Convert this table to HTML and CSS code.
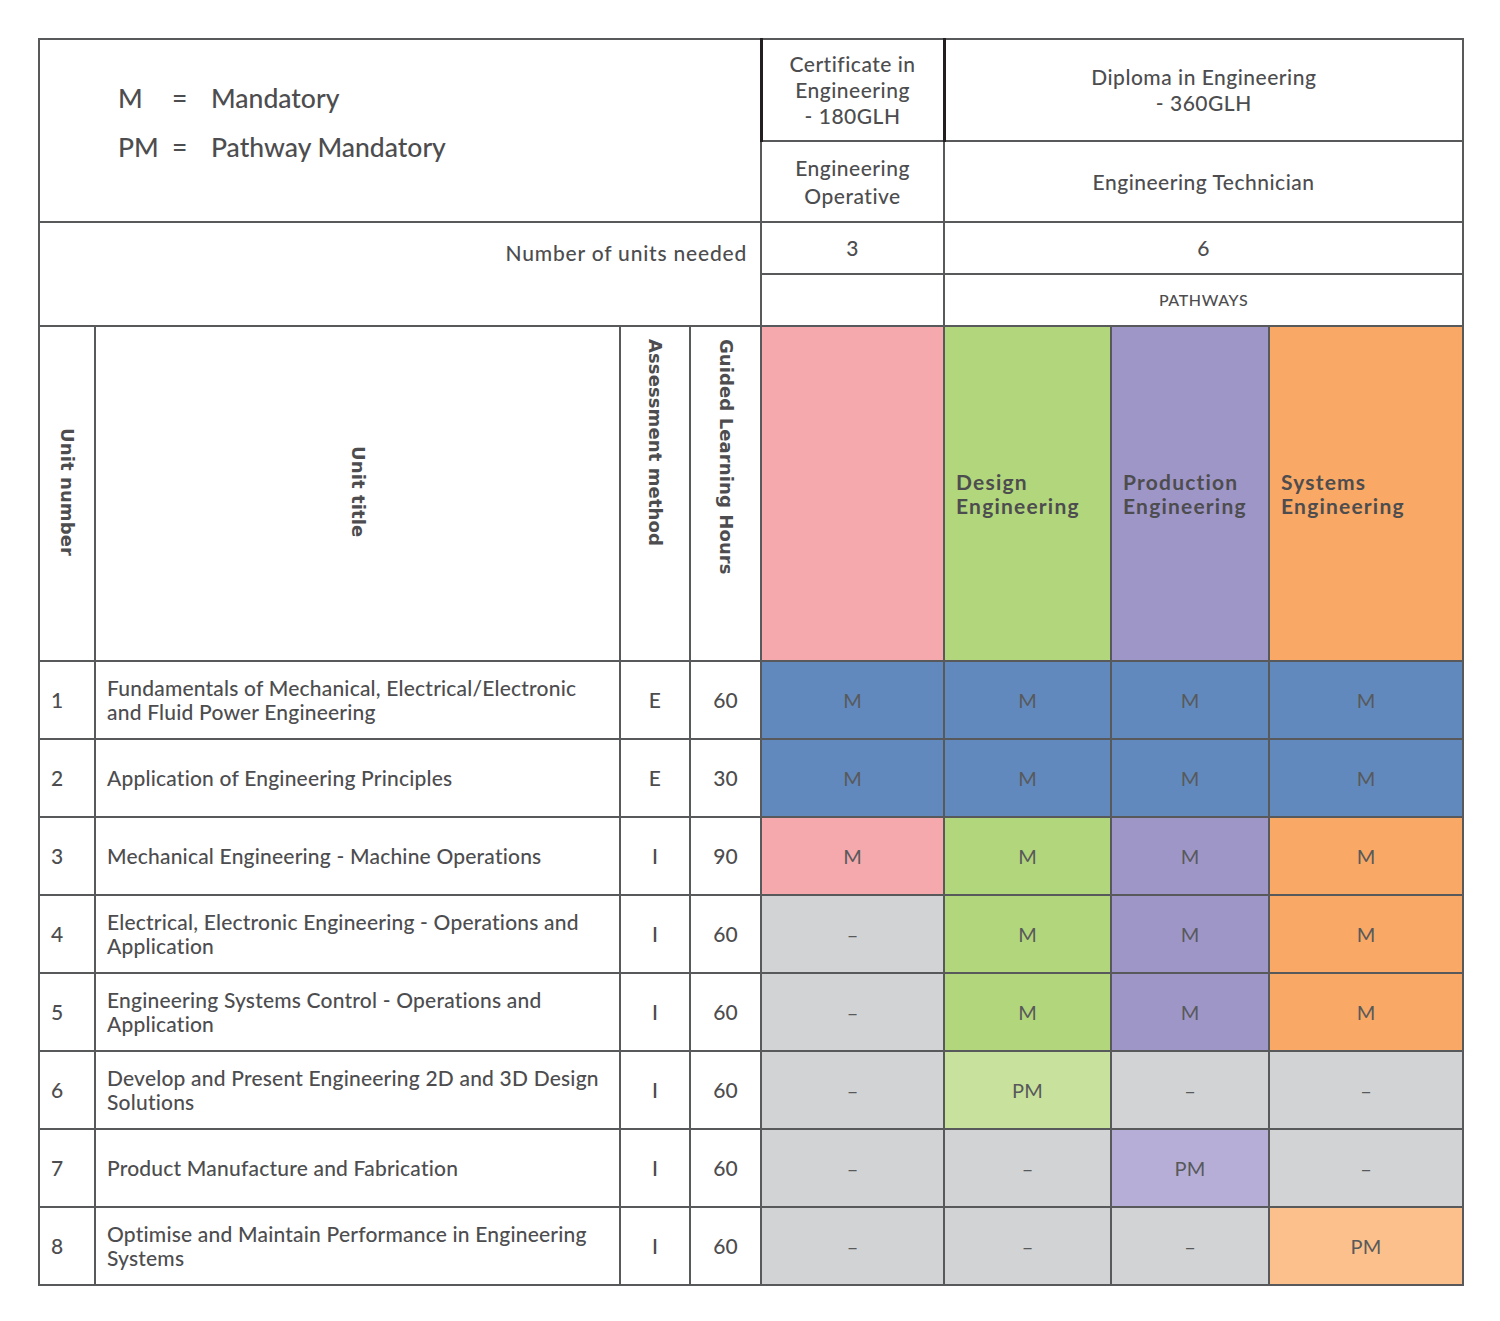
FILE: index.html
```html
<!DOCTYPE html>
<html lang="en">
<head>
<meta charset="utf-8">
<title>Engineering units</title>
<link rel="stylesheet" href="styles.css">
</head>
<body>
<table class="grid">
  <colgroup>
    <col class="c-num"><col class="c-title"><col class="c-am"><col class="c-glh">
    <col class="c-op"><col class="c-de"><col class="c-pe"><col class="c-se">
  </colgroup>
  <tr class="r-qual">
    <td colspan="4" rowspan="2" class="legend">
      <div class="legend-grid">
        <span>M</span><span>=</span><span>Mandatory</span>
        <span>PM</span><span>=</span><span>Pathway Mandatory</span>
      </div>
    </td>
    <td class="hd cert">Certificate in<br>Engineering<br>- 180GLH</td>
    <td colspan="3" class="hd">Diploma in Engineering<br>- 360GLH</td>
  </tr>
  <tr class="r-role">
    <td class="hd role">Engineering<br>Operative</td>
    <td colspan="3" class="hd">Engineering Technician</td>
  </tr>
  <tr class="r-units">
    <td colspan="4" rowspan="2" class="units-label">Number of units needed</td>
    <td class="hd">3</td>
    <td colspan="3" class="hd">6</td>
  </tr>
  <tr class="r-path">
    <td></td>
    <td colspan="3" class="pathways">PATHWAYS</td>
  </tr>
  <tr class="r-head">
    <td class="vh mid"><span class="vtext">Unit number</span></td>
    <td class="vh mid"><span class="vtext">Unit title</span></td>
    <td class="vh top"><span class="vtext">Assessment method</span></td>
    <td class="vh top"><span class="vtext">Guided Learning Hours</span></td>
    <td class="pink"></td>
    <td class="green path-name">Design<br>Engineering</td>
    <td class="purple path-name">Production<br>Engineering</td>
    <td class="orange path-name">Systems<br>Engineering</td>
  </tr>
  <tr class="r-data">
    <td class="num">1</td>
    <td class="title">Fundamentals of Mechanical, Electrical/Electronic<br>and Fluid Power Engineering</td>
    <td class="ctr">E</td><td class="ctr">60</td>
    <td class="mark blue">M</td><td class="mark blue">M</td><td class="mark blue">M</td><td class="mark blue">M</td>
  </tr>
  <tr class="r-data">
    <td class="num">2</td>
    <td class="title">Application of Engineering Principles</td>
    <td class="ctr">E</td><td class="ctr">30</td>
    <td class="mark blue">M</td><td class="mark blue">M</td><td class="mark blue">M</td><td class="mark blue">M</td>
  </tr>
  <tr class="r-data">
    <td class="num">3</td>
    <td class="title">Mechanical Engineering - Machine Operations</td>
    <td class="ctr">I</td><td class="ctr">90</td>
    <td class="mark pink">M</td><td class="mark green">M</td><td class="mark purple">M</td><td class="mark orange">M</td>
  </tr>
  <tr class="r-data">
    <td class="num">4</td>
    <td class="title">Electrical, Electronic Engineering - Operations and<br>Application</td>
    <td class="ctr">I</td><td class="ctr">60</td>
    <td class="mark grey">–</td><td class="mark green">M</td><td class="mark purple">M</td><td class="mark orange">M</td>
  </tr>
  <tr class="r-data">
    <td class="num">5</td>
    <td class="title">Engineering Systems Control - Operations and<br>Application</td>
    <td class="ctr">I</td><td class="ctr">60</td>
    <td class="mark grey">–</td><td class="mark green">M</td><td class="mark purple">M</td><td class="mark orange">M</td>
  </tr>
  <tr class="r-data">
    <td class="num">6</td>
    <td class="title">Develop and Present Engineering 2D and 3D Design<br>Solutions</td>
    <td class="ctr">I</td><td class="ctr">60</td>
    <td class="mark grey">–</td><td class="mark green-lt">PM</td><td class="mark grey">–</td><td class="mark grey">–</td>
  </tr>
  <tr class="r-data">
    <td class="num">7</td>
    <td class="title">Product Manufacture and Fabrication</td>
    <td class="ctr">I</td><td class="ctr">60</td>
    <td class="mark grey">–</td><td class="mark grey">–</td><td class="mark purple-lt">PM</td><td class="mark grey">–</td>
  </tr>
  <tr class="r-data">
    <td class="num">8</td>
    <td class="title">Optimise and Maintain Performance in Engineering<br>Systems</td>
    <td class="ctr">I</td><td class="ctr">60</td>
    <td class="mark grey">–</td><td class="mark grey">–</td><td class="mark grey">–</td><td class="mark orange-lt">PM</td>
  </tr>
</table>
</body>
</html>
```
FILE: styles.css
```css
html, body {
  margin: 0;
  padding: 0;
  background: #ffffff;
}

body {
  padding: 38px 0 0 38px;
  font-family: "Lato", "Liberation Sans", sans-serif;
  font-weight: 500;
  color: #4d4d4f;
}

.grid {
  border-collapse: collapse;
  table-layout: fixed;
  width: 1424px;
  border: 2px solid #58595b;
}

.grid td {
  border: 2px solid #58595b;
  padding: 0;
  font-size: 21px;
  line-height: 24px;
  letter-spacing: 0.2px;
}

.c-num { width: 56px; }
.c-title { width: 525px; }
.c-am { width: 70px; }
.c-glh { width: 71px; }
.c-op { width: 183px; }
.c-de { width: 167px; }
.c-pe { width: 158px; }
.c-se { width: 194px; }

.r-qual { height: 102px; }
.r-role { height: 81px; }
.r-units { height: 52px; }
.r-path { height: 52px; }
.r-head { height: 335px; }
.r-data { height: 78px; }

.legend {
  vertical-align: top;
  padding: 34px 0 0 78px !important;
}

.legend-grid {
  display: grid;
  grid-template-columns: 54px 39px auto;
  font-size: 26.5px;
  line-height: 49px;
  letter-spacing: 0;
}

.grid td.hd {
  text-align: center;
  vertical-align: middle;
  font-size: 21px;
  line-height: 26px;
  letter-spacing: 0.5px;
}

.grid td.role {
  line-height: 28px;
}

.grid td.cert {
  border-left: 3px solid #231f20;
  border-right: 3px solid #231f20;
}

.grid td.units-label {
  vertical-align: top;
  text-align: right;
  padding: 17px 13px 0 0;
  font-size: 21px;
  line-height: 26px;
  letter-spacing: 0.8px;
}

.grid td.pathways {
  text-align: center;
  vertical-align: middle;
  font-size: 16px;
  letter-spacing: 0.6px;
}

.vh {
  text-align: center;
}

.vh.mid { vertical-align: middle; }
.vh.top { vertical-align: top; padding-top: 12px !important; }

.vtext {
  display: inline-block;
  writing-mode: vertical-rl;
  font-family: "DejaVu Sans", sans-serif;
  font-weight: bold;
  font-size: 18px;
  line-height: 22px;
  letter-spacing: 0.1px;
  color: #4d4d4f;
}

.grid td.path-name {
  font-weight: bold;
  font-size: 21px;
  line-height: 24px;
  letter-spacing: 1.2px;
  vertical-align: middle;
  padding-left: 11px;
}

.grid td.num {
  padding-left: 11px;
  vertical-align: middle;
}

.grid td.title {
  padding-left: 11px;
  vertical-align: middle;
}

.ctr {
  text-align: center;
  vertical-align: middle;
}

.grid td.mark {
  text-align: center;
  vertical-align: middle;
  font-size: 20px;
  font-weight: 400;
  color: #58595b;
}

.pink { background: #f5a9ac; }
.green { background: #b2d67c; }
.purple { background: #9f96c8; }
.orange { background: #f9a865; }
.blue { background: #6189bd; }
.grey { background: #d1d3d4; }
.green-lt { background: #c8e29d; }
.purple-lt { background: #b6aed7; }
.orange-lt { background: #fcc08c; }
```
